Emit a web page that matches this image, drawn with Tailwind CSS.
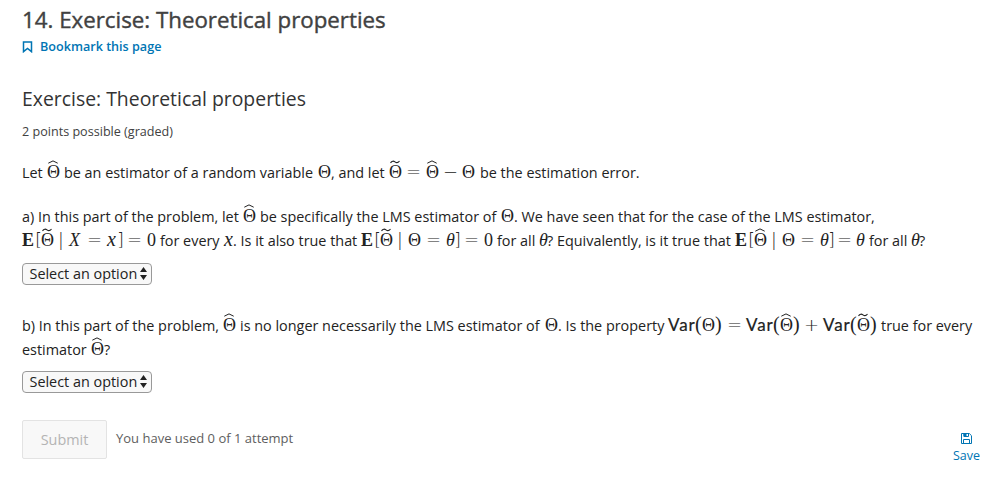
<!DOCTYPE html>
<html lang="en">
<head>
  <meta charset="UTF-8">
  <meta name="viewport" content="width=device-width, initial-scale=1.0">
  <title>14. Exercise: Theoretical properties</title>
  <script src="https://cdn.jsdelivr.net/npm/@tailwindcss/browser@4"></script>
</head>
<body class="bg-white font-['Open_Sans',sans-serif] text-[14.4px] text-[#222]">
  <svg class="hidden">
    <symbol id="hat" viewBox="0 0 12 4"><path d="M1.3 3.2 6 .9l4.700 2.300" fill="none" stroke="#222" stroke-width="1"/></symbol>
    <symbol id="tilde" viewBox="0 0 12 4"><path d="M1.500 2.900C3 .8 4.500.8 6 1.900s3 1.100 4.500-.9" fill="none" stroke="#222" stroke-width="1.100"/></symbol>
    <symbol id="arrows" viewBox="0 0 7 13"><path d="M3.500 0 7 5H0zM3.500 13 0 8h7z" fill="#222"/></symbol>
  </svg>

  <main class="flex h-[480px] flex-col pl-[22px] pr-[22px]">
    <h2 class="mt-[5px] h-[30px] whitespace-nowrap text-[22.3px] leading-[30px] text-[#414141] [-webkit-text-stroke:0.4px_#414141]">14. Exercise: Theoretical properties</h2>
    <button class="mt-[2px] flex h-5 items-center self-start whitespace-nowrap text-[12.6px] font-semibold text-[#0075b4]">
      <svg class="mr-[7px] h-[12px] w-[11px]" viewBox="0 0 11 12" fill="none" stroke="#0075b4" stroke-width="1.500"><path d="M1.500 1h8v9.700L5.500 7.500l-4 3.200z"/></svg>
      <span>Bookmark this page</span>
    </button>

    <h3 class="mt-[28px] h-[28px] whitespace-nowrap text-[19.4px] leading-[28px] text-[#333]">Exercise: Theoretical properties</h3>
    <p class="mt-[9px] h-5 whitespace-nowrap text-[12.6px] leading-5 text-[#414141]">2 points possible (graded)</p>

    <!-- statement -->
    <div class="mt-[19px] flex h-6 items-baseline whitespace-nowrap leading-6">
      <span class="w-[25px]">Let</span>
      <span class="relative w-[17px] font-['Liberation_Serif',serif] text-[18px] leading-4">Θ<svg class="absolute -top-1 left-0 h-1 w-3"><use href="#hat"/></svg></span>
      <span class="w-[254px]">be an estimator of a random variable</span>
      <span class="w-[13px] font-['Liberation_Serif',serif] text-[18px] leading-4">Θ</span>
      <span class="w-[58px]">, and let</span>
      <span class="relative w-[17px] font-['Liberation_Serif',serif] text-[18px] leading-4">Θ<svg class="absolute -top-1 left-0 h-1 w-3"><use href="#tilde"/></svg></span>
      <span class="w-[20px] font-['DejaVu_Sans',sans-serif] text-[18px] leading-4 font-extralight">=</span>
      <span class="relative w-[17px] font-['Liberation_Serif',serif] text-[18px] leading-4">Θ<svg class="absolute -top-1 left-0 h-1 w-3"><use href="#hat"/></svg></span>
      <span class="w-[19px] font-['DejaVu_Sans',sans-serif] text-[18px] leading-4 font-extralight">−</span>
      <span class="w-[18px] font-['Liberation_Serif',serif] text-[18px] leading-4">Θ</span>
      <span>be the estimation error.</span>
    </div>

    <!-- part a -->
    <div class="mt-[20px] flex h-6 items-baseline whitespace-nowrap leading-6">
      <span class="w-[221px]">a) In this part of the problem, let</span>
      <span class="relative w-[17px] font-['Liberation_Serif',serif] text-[18px] leading-4">Θ<svg class="absolute -top-1 left-0 h-1 w-3"><use href="#hat"/></svg></span>
      <span class="w-[241px]">be specifically the LMS estimator of</span>
      <span class="w-[13px] font-['Liberation_Serif',serif] text-[18px] leading-4">Θ</span>
      <span>. We have seen that for the case of the LMS estimator,</span>
    </div>
    <div class="flex h-6 items-baseline whitespace-nowrap leading-6">
      <span class="w-[13px] font-['Liberation_Serif',serif] text-[18px] leading-4 font-bold">E</span>
      <span class="w-[6px] font-['DejaVu_Sans',sans-serif] text-[18px] leading-4 font-extralight">[</span>
      <span class="relative w-[17px] font-['Liberation_Serif',serif] text-[18px] leading-4">Θ<svg class="absolute -top-1 left-0 h-1 w-3"><use href="#tilde"/></svg></span>
      <span class="w-[11px] font-['DejaVu_Sans',sans-serif] text-[17px] leading-4 font-extralight">|</span>
      <span class="w-[18px] font-['Liberation_Serif',serif] text-[18px] leading-4 italic">X</span>
      <span class="w-[20px] font-['DejaVu_Sans',sans-serif] text-[18px] leading-4 font-extralight">=</span>
      <span class="w-[10px] font-['Liberation_Serif',serif] text-[20px] leading-4 italic">x</span>
      <span class="w-[10px] font-['DejaVu_Sans',sans-serif] text-[18px] leading-4 font-extralight">]</span>
      <span class="w-[20px] font-['DejaVu_Sans',sans-serif] text-[18px] leading-4 font-extralight">=</span>
      <span class="w-[13px] font-['Liberation_Serif',serif] text-[18px] leading-4">0</span>
      <span class="w-[64px]">for every</span>
      <span class="w-[9px] font-['Liberation_Serif',serif] text-[20px] leading-4 italic">x</span>
      <span class="w-[128px]">. Is it also true that</span>
      <span class="w-[13px] font-['Liberation_Serif',serif] text-[18px] leading-4 font-bold">E</span>
      <span class="w-[6px] font-['DejaVu_Sans',sans-serif] text-[18px] leading-4 font-extralight">[</span>
      <span class="relative w-[17px] font-['Liberation_Serif',serif] text-[18px] leading-4">Θ<svg class="absolute -top-1 left-0 h-1 w-3"><use href="#tilde"/></svg></span>
      <span class="w-[11px] font-['DejaVu_Sans',sans-serif] text-[17px] leading-4 font-extralight">|</span>
      <span class="w-[18px] font-['Liberation_Serif',serif] text-[18px] leading-4">Θ</span>
      <span class="w-[20px] font-['DejaVu_Sans',sans-serif] text-[18px] leading-4 font-extralight">=</span>
      <span class="w-[8px] font-['Liberation_Serif',serif] text-[18px] leading-4 italic">θ</span>
      <span class="w-[10px] font-['DejaVu_Sans',sans-serif] text-[18px] leading-4 font-extralight">]</span>
      <span class="w-[20px] font-['DejaVu_Sans',sans-serif] text-[18px] leading-4 font-extralight">=</span>
      <span class="w-[13px] font-['Liberation_Serif',serif] text-[18px] leading-4">0</span>
      <span class="w-[42px]">for all</span>
      <span class="w-[8px] font-['Liberation_Serif',serif] text-[18px] leading-4 italic">θ</span>
      <span class="w-[188px]">? Equivalently, is it true that</span>
      <span class="w-[13px] font-['Liberation_Serif',serif] text-[18px] leading-4 font-bold">E</span>
      <span class="w-[6px] font-['DejaVu_Sans',sans-serif] text-[18px] leading-4 font-extralight">[</span>
      <span class="relative w-[17px] font-['Liberation_Serif',serif] text-[18px] leading-4">Θ<svg class="absolute -top-1 left-0 h-1 w-3"><use href="#hat"/></svg></span>
      <span class="w-[11px] font-['DejaVu_Sans',sans-serif] text-[17px] leading-4 font-extralight">|</span>
      <span class="w-[18px] font-['Liberation_Serif',serif] text-[18px] leading-4">Θ</span>
      <span class="w-[20px] font-['DejaVu_Sans',sans-serif] text-[18px] leading-4 font-extralight">=</span>
      <span class="w-[8px] font-['Liberation_Serif',serif] text-[18px] leading-4 italic">θ</span>
      <span class="w-[9px] font-['DejaVu_Sans',sans-serif] text-[18px] leading-4 font-extralight">]</span>
      <span class="w-[19px] font-['DejaVu_Sans',sans-serif] text-[18px] leading-4 font-extralight">=</span>
      <span class="w-[13px] font-['Liberation_Serif',serif] text-[18px] leading-4 italic">θ</span>
      <span class="w-[42px]">for all</span>
      <span class="w-[8px] font-['Liberation_Serif',serif] text-[18px] leading-4 italic">θ</span>
      <span>?</span>
    </div>
    <button class="mt-[10px] flex h-[22px] w-[130px] items-center justify-between rounded-[4px] border border-[#999] bg-[#f8f8f8] pr-[4px] pl-[6.5px] leading-5 whitespace-nowrap">
      <span>Select an option</span>
      <svg class="-mt-[2px] h-[13px] w-[7px]"><use href="#arrows"/></svg>
    </button>

    <!-- part b -->
    <div class="mt-[29px] flex h-6 items-baseline whitespace-nowrap leading-6">
      <span class="w-[201px]">b) In this part of the problem,</span>
      <span class="relative w-[17px] font-['Liberation_Serif',serif] text-[18px] leading-4">Θ<svg class="absolute -top-1 left-0 h-1 w-3"><use href="#hat"/></svg></span>
      <span class="w-[305px]">is no longer necessarily the LMS estimator of</span>
      <span class="w-[13px] font-['Liberation_Serif',serif] text-[18px] leading-4">Θ</span>
      <span class="w-[110px]">. Is the property</span>
      <span class="w-[27px] font-[Lato,sans-serif] text-[17px] leading-4 tracking-[0.9px] [-webkit-text-stroke:0.2px_#222]">Var</span>
      <span class="w-[7px] font-['Liberation_Serif',serif] text-[20px] leading-4">(</span>
      <span class="w-[13px] font-['Liberation_Serif',serif] text-[18px] leading-4">Θ</span>
      <span class="w-[12px] font-['Liberation_Serif',serif] text-[20px] leading-4">)</span>
      <span class="w-[19px] font-['DejaVu_Sans',sans-serif] text-[18px] leading-4 font-extralight">=</span>
      <span class="w-[27px] font-[Lato,sans-serif] text-[17px] leading-4 tracking-[0.9px] [-webkit-text-stroke:0.2px_#222]">Var</span>
      <span class="w-[7px] font-['Liberation_Serif',serif] text-[20px] leading-4">(</span>
      <span class="relative w-[13px] font-['Liberation_Serif',serif] text-[18px] leading-4">Θ<svg class="absolute -top-1 left-0 h-1 w-3"><use href="#hat"/></svg></span>
      <span class="w-[11px] font-['Liberation_Serif',serif] text-[20px] leading-4">)</span>
      <span class="w-[19px] font-['DejaVu_Sans',sans-serif] text-[18px] leading-4 font-extralight">+</span>
      <span class="w-[27px] font-[Lato,sans-serif] text-[17px] leading-4 tracking-[0.9px] [-webkit-text-stroke:0.2px_#222]">Var</span>
      <span class="w-[7px] font-['Liberation_Serif',serif] text-[20px] leading-4">(</span>
      <span class="relative w-[13px] font-['Liberation_Serif',serif] text-[18px] leading-4">Θ<svg class="absolute -top-1 left-0 h-1 w-3"><use href="#tilde"/></svg></span>
      <span class="w-[11px] font-['Liberation_Serif',serif] text-[20px] leading-4">)</span>
      <span>true for every</span>
    </div>
    <div class="flex h-6 items-baseline whitespace-nowrap leading-6">
      <span class="w-[69px]">estimator</span>
      <span class="relative w-[13px] font-['Liberation_Serif',serif] text-[18px] leading-4">Θ<svg class="absolute -top-1 left-0 h-1 w-3"><use href="#hat"/></svg></span>
      <span>?</span>
    </div>
    <button class="mt-[9px] flex h-[22px] w-[130px] items-center justify-between rounded-[4px] border border-[#999] bg-[#f8f8f8] pr-[4px] pl-[6.5px] leading-5 whitespace-nowrap">
      <span>Select an option</span>
      <svg class="-mt-[2px] h-[13px] w-[7px]"><use href="#arrows"/></svg>
    </button>

    <!-- actions -->
    <div class="mt-[27px] flex items-start whitespace-nowrap">
      <button class="h-[39px] w-[85px] rounded-[2px] border border-[#e3e3e3] bg-[#f8f8f8] text-[14.4px] text-[#b4b4b4]" disabled>Submit</button>
      <span class="mt-[8px] ml-[9px] text-[13px] leading-5 text-[#5e5e5e]">You have used 0 of 1 attempt</span>
      <button class="mt-[13px] ml-auto flex flex-col items-center text-[12.5px] leading-4 text-[#0075b4]">
        <svg class="h-[11px] w-[11px]" viewBox="0 0 11 11" fill="none" stroke="#0075b4"><path d="M.5.5h7.800l2.200 2.200v7.800H.5z"/><path d="M2.500 10.500v-4h6v4M3 .5v3h4.500v-3"/><path d="M3 .5h2v3H3z" fill="#0075b4"/></svg>
        <span class="mt-[4px]">Save</span>
      </button>
    </div>
  </main>
</body>
</html>
